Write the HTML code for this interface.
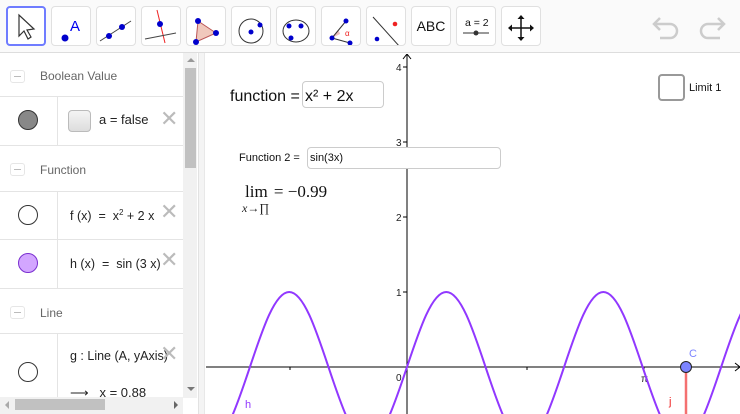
<!DOCTYPE html>
<html><head><meta charset="utf-8"><style>
*{box-sizing:border-box;margin:0;padding:0}
html,body{width:740px;height:414px;overflow:hidden}
body{background:#fff;font-family:"Liberation Sans",sans-serif;position:relative}
.tb{position:absolute;left:0;top:0;width:740px;height:53px;background:#fafafa;border-bottom:1px solid #ddd}
.btn{position:absolute;top:6px;width:40px;height:40px;border:1px solid #e0e0e0;border-radius:4px;background:#fff}
.sel{border:2px solid #6f7cff}
.a{position:absolute}
.hdr{position:absolute;left:0;width:183px;font-size:12px;color:#666;border-bottom:1px solid #e4e4e4}
.mn{position:absolute;left:10px;width:15px;height:13px;border:1px solid #e6e6e6;border-radius:3px}
.mn:after{content:"";position:absolute;left:3px;top:5px;width:7px;height:1px;background:#bbb}
.row{position:absolute;left:0;width:183px;border-bottom:1px solid #e4e4e4;overflow:hidden}
.cell{position:absolute;left:57px;top:0;bottom:0;border-left:1px solid #e4e4e4}
.circ{position:absolute;left:18px;width:20px;height:20px;border-radius:50%;border:1px solid #333}
.x{position:absolute;left:160px;font-size:22px;color:#bbb;line-height:20px}
.t{position:absolute;left:70px;font-size:12.5px;color:#222;white-space:nowrap}
</style></head><body>
<div class="tb">
<div class="btn sel" style="left:6px"><svg width="36" height="36"><path d="M11 7 L11 28 L16 23 L20 31 L23 29 L19 22 L26 21 Z" fill="#fff" stroke="#333" stroke-width="1.2"/></svg></div>
<div class="btn" style="left:51px"><svg width="38" height="38"><circle cx="13" cy="31" r="3.5" fill="#0000cc"/><text x="18" y="24" font-size="15" fill="#0000ee" font-family="Liberation Sans">A</text></svg></div>
<div class="btn" style="left:96px"><svg width="38" height="38"><line x1="3" y1="34" x2="34" y2="14" stroke="#444"/><circle cx="12" cy="29" r="3" fill="#00c"/><circle cx="25" cy="20" r="3" fill="#00c"/></svg></div>
<div class="btn" style="left:141px"><svg width="38" height="38"><line x1="15" y1="3" x2="23" y2="36" stroke="#e22"/><line x1="3" y1="32" x2="34" y2="26" stroke="#444"/><circle cx="18" cy="17" r="3" fill="#00c"/></svg></div>
<div class="btn" style="left:186px"><svg width="38" height="38"><path d="M11 14 L29 26 L9 35 Z" fill="#f0c8bc" stroke="#b55" /><circle cx="11" cy="14" r="3" fill="#00c"/><circle cx="29" cy="26" r="3" fill="#00c"/><circle cx="9" cy="35" r="3" fill="#00c"/></svg></div>
<div class="btn" style="left:231px"><svg width="38" height="38"><circle cx="19" cy="24" r="12" fill="none" stroke="#333"/><circle cx="19" cy="25" r="2.5" fill="#00c"/><circle cx="28" cy="18" r="2.5" fill="#00c"/></svg></div>
<div class="btn" style="left:276px"><svg width="38" height="38"><ellipse cx="19" cy="24" rx="13" ry="11" fill="none" stroke="#333"/><circle cx="12" cy="19" r="2.5" fill="#00c"/><circle cx="24" cy="19" r="2.5" fill="#00c"/><circle cx="14" cy="31" r="2.5" fill="#00c"/></svg></div>
<div class="btn" style="left:321px"><svg width="38" height="38"><path d="M10 31 L18 27 A9 9 0 0 0 16 23 Z" fill="#f0c0c0"/><line x1="10" y1="31" x2="24" y2="14" stroke="#333"/><line x1="10" y1="31" x2="28" y2="36" stroke="#333"/><circle cx="10" cy="31" r="2.5" fill="#00c"/><circle cx="24" cy="14" r="2.5" fill="#00c"/><circle cx="28" cy="36" r="2.5" fill="#00c"/><text x="23" y="29" font-size="8" fill="#e22">α</text></svg></div>
<div class="btn" style="left:366px"><svg width="38" height="38"><line x1="6" y1="10" x2="33" y2="40" stroke="#333"/><circle cx="28" cy="17" r="2.3" fill="#e22"/><circle cx="10" cy="32" r="2.3" fill="#00c"/></svg></div>
<div class="btn" style="left:411px;font-size:14px;text-align:center;line-height:38px;color:#111">ABC</div>
<div class="btn" style="left:456px"><svg width="38" height="38"><text x="8" y="19" font-size="10.5" fill="#111" font-family="Liberation Sans">a = 2</text><line x1="6" y1="26" x2="32" y2="26" stroke="#333"/><circle cx="19" cy="26" r="2.5" fill="#333"/></svg></div>
<div class="btn" style="left:501px"><svg width="38" height="38"><path d="M19 9 V33 M7 21 H31" stroke="#111" stroke-width="1.5"/><path d="M19 8 L15.5 12 H22.5Z M19 34 L15.5 30 H22.5Z M6 21 L10 17.5 V24.5Z M32 21 L28 17.5 V24.5Z" fill="#111"/></svg></div>
<svg class="a" style="left:650px;top:12px" width="80" height="30"><path d="M10 6 L4 12 L10 18 M4 12 H20 A7 7 0 0 1 20 26 H10" fill="none" stroke="#ccc" stroke-width="2.5"/><path d="M68 6 L74 12 L68 18 M74 12 H58 A7 7 0 0 0 58 26 H70" fill="none" stroke="#ccc" stroke-width="2.5"/></svg>
</div>

<div class="hdr" style="top:55px;height:42px"><div class="mn" style="top:15px"></div><span class="a" style="left:40px;top:14px">Boolean Value</span></div>
<div class="row" style="top:97px;height:49px"><div class="circ" style="top:13px;background:#888"></div><div class="cell"></div>
<div class="a" style="left:68px;top:13px;width:23px;height:22px;border:1px solid #bbb;border-radius:4px;background:linear-gradient(#f4f4f4,#ddd)"></div>
<span class="t" style="left:99px;top:15px;font-size:13px">a = false</span><span class="x" style="top:12px">✕</span></div>
<div class="hdr" style="top:146px;height:46px"><div class="mn" style="top:17px"></div><span class="a" style="left:40px;top:17px">Function</span></div>
<div class="row" style="top:192px;height:48px"><div class="circ" style="top:13px;background:#fff"></div><div class="cell"></div>
<span class="t" style="top:16px">f (x) &nbsp;= &nbsp;x<sup style="font-size:8px">2</sup> + 2 x</span><span class="x" style="top:10px">✕</span></div>
<div class="row" style="top:240px;height:49px"><div class="circ" style="top:13px;background:#d3a6ff;border-color:#7a2fd0"></div><div class="cell"></div>
<span class="t" style="top:17px">h (x) &nbsp;= &nbsp;sin (3 x)</span><span class="x" style="top:10px">✕</span></div>
<div class="hdr" style="top:289px;height:45px"><div class="mn" style="top:17px"></div><span class="a" style="left:40px;top:17px">Line</span></div>
<div class="row" style="top:334px;height:63px;border:0"><div class="circ" style="top:28px;background:#fff"></div><div class="cell"></div>
<span class="t" style="top:15px">g : Line (A, yAxis)</span><span class="x" style="top:10px">✕</span>
<span class="t" style="top:51px;font-size:13px">⟶ &nbsp; x = 0.88</span></div>
<div class="a" style="left:183px;top:53px;width:14px;height:345px;background:#f1f1f1"></div>
<div class="a" style="left:185px;top:68px;width:11px;height:100px;background:#c1c1c1"></div>
<div class="a" style="left:187px;top:58px;border:4px solid transparent;border-bottom:4px solid #999;border-top:0"></div>
<div class="a" style="left:187px;top:387px;border:4px solid transparent;border-top:4px solid #777;border-bottom:0"></div>
<div class="a" style="left:0;top:397px;width:183px;height:17px;background:#f1f1f1"></div>
<div class="a" style="left:15px;top:399px;width:90px;height:11px;background:#c1c1c1"></div>
<div class="a" style="left:5px;top:401px;border:4px solid transparent;border-right:4px solid #aaa;border-left:0"></div>
<div class="a" style="left:174px;top:401px;border:4px solid transparent;border-left:4px solid #666;border-right:0"></div>
<div class="a" style="left:198px;top:53px;width:7px;height:361px;background:#f4f4f4;border-left:1px solid #e2e2e2;border-right:1px solid #e8e8e8"></div>

<svg class="a" style="left:0;top:0" width="740" height="414">
<defs><clipPath id="c"><rect x="206" y="54" width="534" height="360"/></clipPath></defs>
<g clip-path="url(#c)">
<line x1="407" y1="54" x2="407" y2="414" stroke="#000"/>
<path d="M403 59 L407 54 L411 59" fill="none" stroke="#000"/>
<line x1="206" y1="367" x2="740" y2="367" stroke="#000"/>
<path d="M735 363 L740 367 L735 371" fill="none" stroke="#000"/>
<g stroke="#000"><line x1="403" y1="67" x2="407" y2="67"/><line x1="403" y1="142" x2="407" y2="142"/><line x1="403" y1="217" x2="407" y2="217"/><line x1="403" y1="292" x2="407" y2="292"/>
<line x1="290" y1="367" x2="290" y2="370"/><line x1="527" y1="367" x2="527" y2="370"/><line x1="644" y1="367" x2="644" y2="370"/></g>
<g font-size="10" fill="#222" font-family="Liberation Sans"><text x="396" y="71">4</text><text x="396" y="146">3</text><text x="396" y="221">2</text><text x="396" y="296">1</text><text x="396" y="381">0</text><text x="641" y="382">π</text></g>
<path transform="translate(407,367) scale(25,-75)" vector-effect="non-scaling-stroke" fill="none" stroke="#9138ff" stroke-width="2"
d="M-9.4248 0 c0.5123,-0.5123 1.0023,-1 1.5708,-1 c0.5685,0 1.0585,0.4877 1.5708,1 c0.5123,0.5123 1.0023,1 1.5708,1 c0.5685,0 1.0585,-0.4877 1.5708,-1
c0.5123,-0.5123 1.0023,-1 1.5708,-1 c0.5685,0 1.0585,0.4877 1.5708,1 c0.5123,0.5123 1.0023,1 1.5708,1 c0.5685,0 1.0585,-0.4877 1.5708,-1
c0.5123,-0.5123 1.0023,-1 1.5708,-1 c0.5685,0 1.0585,0.4877 1.5708,1 c0.5123,0.5123 1.0023,1 1.5708,1 c0.5685,0 1.0585,-0.4877 1.5708,-1
c0.5123,-0.5123 1.0023,-1 1.5708,-1 c0.5685,0 1.0585,0.4877 1.5708,1 c0.5123,0.5123 1.0023,1 1.5708,1 c0.5685,0 1.0585,-0.4877 1.5708,-1"/>
<line x1="686" y1="367" x2="686" y2="414" stroke="#f47070" stroke-width="2.5"/>
<circle cx="686" cy="367" r="5.5" fill="#7c84ff" stroke="#222"/>
<text x="689" y="357" font-size="11" fill="#7c84ff" font-family="Liberation Sans">C</text>
<text x="669" y="405" font-size="11" fill="#e22" font-family="Liberation Sans">j</text>
<text x="245" y="408" font-size="11" fill="#9138ff" font-family="Liberation Sans">h</text>
</g>
</svg>
<div class="a" style="left:230px;top:88px;font-size:16px;color:#111">function =</div>
<div class="a" style="left:302px;top:81px;width:82px;height:27px;border:1px solid #ccc;border-radius:4px;background:#fff;font-size:16px;padding:6px 0 0 2px;color:#111">x² + 2x</div>
<div class="a" style="left:239px;top:152px;font-size:11px;color:#111">Function 2 =</div>
<div class="a" style="left:307px;top:147px;width:194px;height:22px;border:1px solid #ccc;border-radius:4px;background:#fff;font-size:11px;padding:4px 0 0 2px;color:#111">sin(3x)</div>
<div class="a" style="left:245px;top:182px;font-family:'Liberation Serif',serif;font-size:17px;color:#111">lim <span style="margin-left:2px">= −0.99</span></div>
<div class="a" style="left:242px;top:201px;font-family:'Liberation Serif',serif;font-size:12px;color:#222"><i>x</i>→∏</div>
<div class="a" style="left:658px;top:74px;width:27px;height:27px;border:2px solid #999;border-radius:4px;background:#fff"></div>
<div class="a" style="left:689px;top:82px;font-size:11px;color:#111">Limit 1</div>
</body></html>
